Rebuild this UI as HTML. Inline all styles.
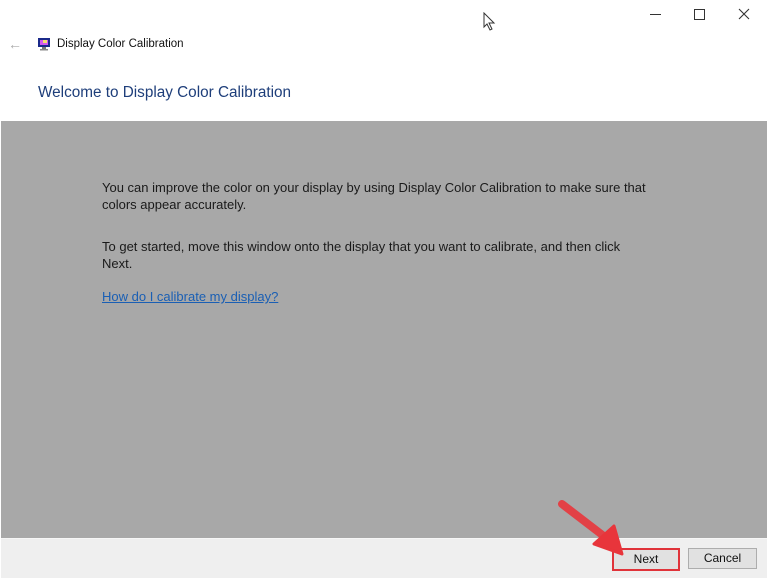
<!DOCTYPE html>
<html><head><style>
body{margin:0;width:768px;height:579px;background:#fff;position:relative;overflow:hidden;font-family:"Liberation Sans",sans-serif;}
.a{position:absolute;}
.gray{left:1px;top:121px;width:766px;height:417px;background:#a8a8a8;}
.foot{left:1px;top:538px;width:766px;height:39px;background:#efefef;border-top:1px solid #f6f6f6;}
.t{font-size:13px;color:#1a1a1a;line-height:17px;}
.btn{font-size:12px;color:#111;text-align:center;line-height:19px;background:#e1e1e1;border:1px solid #adadad;}
</style></head><body>
<div class="a" style="left:8px;top:36px;color:#aaa;font-size:14px">&#8592;</div>
<svg class="a" style="left:37px;top:37px" width="14" height="14" viewBox="0 0 14 14"><rect x="1" y="1" width="12" height="9" fill="#1b2a8a"/><rect x="3" y="3" width="8" height="5" fill="#d35af0"/><rect x="6" y="3" width="4" height="3" fill="#f5e070"/><rect x="5" y="10" width="4" height="2" fill="#777"/><rect x="3" y="12" width="8" height="1.5" fill="#888"/></svg>
<div class="a" style="left:57px;top:38px;font-size:11.5px;color:#111">Display Color Calibration</div>
<div class="a" style="left:38px;top:84px;font-size:15.3px;color:#1e3e7a">Welcome to Display Color Calibration</div>
<svg class="a" style="left:482px;top:12px" width="14" height="20" viewBox="0 0 14 20"><path d="M2 1 L2 15 L5 12 L8 18 L10 17 L7 11 L12 11 Z" fill="#fff" stroke="#333" stroke-width="1"/></svg>
<div class="a" style="left:650px;top:14px;width:11px;height:1px;background:#333"></div>
<div class="a" style="left:694px;top:9px;width:9px;height:9px;border:1px solid #333"></div>
<svg class="a" style="left:738px;top:8px" width="12" height="12" viewBox="0 0 12 12"><path d="M1 1L11 11M11 1L1 11" stroke="#333" stroke-width="1.1"/></svg>
<div class="a gray"></div>
<div class="a t" style="left:102px;top:179px;width:620px">You can improve the color on your display by using Display Color Calibration to make sure that<br>colors appear accurately.</div>
<div class="a t" style="left:102px;top:238px;width:620px">To get started, move this window onto the display that you want to calibrate, and then click<br>Next.</div>
<div class="a t" style="left:102px;top:288px;color:#1a5fb4;text-decoration:underline">How do I calibrate my display?</div>
<div class="a foot"></div>
<div class="a btn" style="left:612px;top:548px;width:64px;height:19px;border:2px solid #e0333a;">Next</div>
<div class="a btn" style="left:688px;top:548px;width:67px;height:19px;">Cancel</div>
<svg class="a" style="left:550px;top:492px" width="90" height="75" viewBox="0 0 90 75"><g fill="#e8353b" stroke="#e8353b" stroke-linecap="round"><path d="M12 12 L55 45" stroke-width="8" fill="none" opacity="0.9"/><path d="M44 52 L72 62 L64 34 Z" stroke-width="3" stroke-linejoin="round"/></g></svg>
</body></html>
